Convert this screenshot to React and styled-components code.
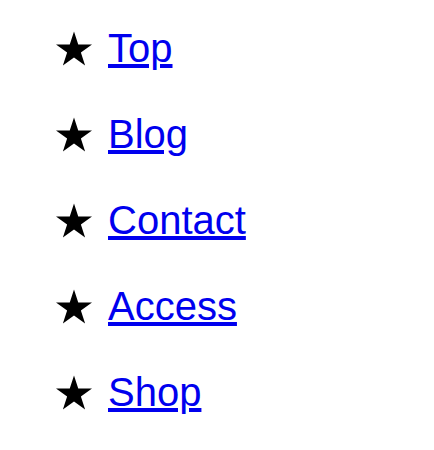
import React from 'react';
import styled, { createGlobalStyle } from 'styled-components';

const GlobalStyle = createGlobalStyle`
  html, body {
    margin: 0;
    padding: 0;
    background: #fff;
  }
  body {
    font-family: "Liberation Sans", Arial, sans-serif;
  }
`;

const links = ['Top', 'Blog', 'Contact', 'Access', 'Shop'];

function Star() {
  return (
    <StarIcon viewBox="0 0 100 95" aria-hidden="true">
      <polygon points="50,0 61.8,36.3 100,36.3 69.1,58.8 80.9,95 50,72.6 19.1,95 30.9,58.8 0,36.3 38.2,36.3" />
    </StarIcon>
  );
}

function App() {
  return (
    <>
      <GlobalStyle />
      <Nav>
        <List>
          {links.map((name) => (
            <Item key={name}>
              <Star />
              <Link href="#">{name}</Link>
            </Item>
          ))}
        </List>
      </Nav>
    </>
  );
}

export default App;

const Nav = styled.nav`
  padding: 25px 0 0 56px;
`;

const List = styled.ul`
  list-style: none;
  margin: 0;
  padding: 0;
`;

const Item = styled.li`
  display: flex;
  align-items: center;
  gap: 16px;
  height: 46px;
  margin-bottom: 40px;
  font-size: 40px;
  line-height: 46px;
`;

const StarIcon = styled.svg`
  width: 36px;
  height: 35px;
  margin-top: 0;
  flex-shrink: 0;
  fill: #000;
`;

const Link = styled.a`
  color: #0000ee;
  text-decoration: underline;
`;
